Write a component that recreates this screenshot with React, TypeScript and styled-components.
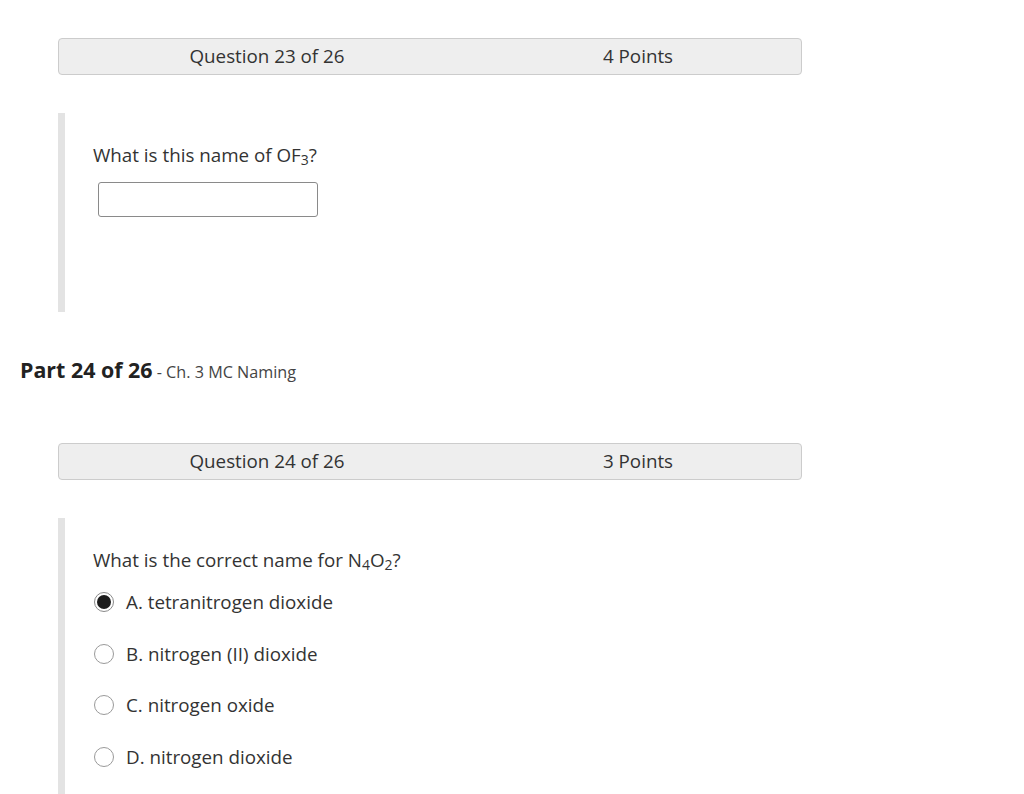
import styled, { createGlobalStyle } from "styled-components";

const GlobalStyle = createGlobalStyle`
  body {
    margin: 0;
    background: #fff;
    font-family: "Open Sans", "Noto Sans", sans-serif;
    color: #333;
  }
`;

type Choice = { label: string; selected?: boolean };

const choices: Choice[] = [
  { label: "A. tetranitrogen dioxide", selected: true },
  { label: "B. nitrogen (II) dioxide" },
  { label: "C. nitrogen oxide" },
  { label: "D. nitrogen dioxide" },
];

export default function App() {
  return (
    <Page>
      <GlobalStyle />
      <QuestionHeader>
        <HeaderCell>Question 23 of 26</HeaderCell>
        <HeaderCell>4 Points</HeaderCell>
      </QuestionHeader>
      <QuestionBody $height={199}>
        <Prompt>
          What is this name of OF<Sub>3</Sub>?
        </Prompt>
        <AnswerInput type="text" />
      </QuestionBody>

      <PartTitle>
        <strong>Part 24 of 26</strong>
        <PartSub> - Ch. 3 MC Naming</PartSub>
      </PartTitle>

      <QuestionHeader>
        <HeaderCell>Question 24 of 26</HeaderCell>
        <HeaderCell>3 Points</HeaderCell>
      </QuestionHeader>
      <QuestionBody $height={300}>
        <Prompt>
          What is the correct name for N<Sub>4</Sub>O<Sub>2</Sub>?
        </Prompt>
        <ChoiceList>
          {choices.map((c) => (
            <ChoiceRow key={c.label}>
              <Radio $selected={!!c.selected} />
              <span>{c.label}</span>
            </ChoiceRow>
          ))}
        </ChoiceList>
      </QuestionBody>
    </Page>
  );
}

const Page = styled.div`
  padding: 38px 0 0 20px;
  width: 1004px;
  height: 794px;
  overflow: hidden;
  box-sizing: border-box;
`;

const QuestionHeader = styled.div`
  margin-left: 38px;
  width: 744px;
  height: 37px;
  box-sizing: border-box;
  padding-bottom: 2px;
  display: grid;
  grid-template-columns: 416px 1fr;
  align-items: center;
  background: #eeeeee;
  border: 1px solid #cccccc;
  border-radius: 4px;
`;

const HeaderCell = styled.div`
  text-align: center;
  font-size: 18.8px;
  color: #333;
`;

const QuestionBody = styled.div<{ $height: number }>`
  margin: 38px 0 0 38px;
  height: ${({ $height }) => $height}px;
  box-sizing: border-box;
  border-left: 7px solid #e3e3e3;
  padding: 29px 0 0 28px;
`;

const Prompt = styled.div`
  font-size: 18.8px;
  line-height: 26px;
  color: #333;
`;

const Sub = styled.span`
  font-size: 14px;
  position: relative;
  top: 3px;
`;

const AnswerInput = styled.input`
  display: block;
  margin: 12px 0 0 5px;
  width: 220px;
  height: 35px;
  box-sizing: border-box;
  border: 1px solid #8a8a8a;
  border-radius: 3px;
  background: #fff;
  outline: none;
`;

const PartTitle = styled.div`
  margin: 44px 0 59px;
  height: 28px;
  line-height: 28px;
  font-size: 21.4px;
  color: #222;

  strong {
    font-weight: 700;
  }
`;

const PartSub = styled.span`
  font-size: 16.2px;
  color: #444;
`;

const ChoiceList = styled.div`
  margin-top: 14px;
  display: flex;
  flex-direction: column;
  gap: 25.6px;
`;

const ChoiceRow = styled.div`
  display: flex;
  align-items: center;
  gap: 12px;
  height: 26px;
  padding-left: 1px;
  font-size: 18.8px;
  color: #333;
`;

const Radio = styled.span<{ $selected: boolean }>`
  width: 20px;
  height: 20px;
  box-sizing: border-box;
  border-radius: 50%;
  border: 1px solid ${({ $selected }) => ($selected ? "#8a8a8a" : "#9a9a9a")};
  background: #fff;
  display: flex;
  align-items: center;
  justify-content: center;
  flex-shrink: 0;

  &::after {
    content: "";
    width: 14px;
    height: 14px;
    border-radius: 50%;
    background: #1c1c1c;
    display: ${({ $selected }) => ($selected ? "block" : "none")};
  }
`;
